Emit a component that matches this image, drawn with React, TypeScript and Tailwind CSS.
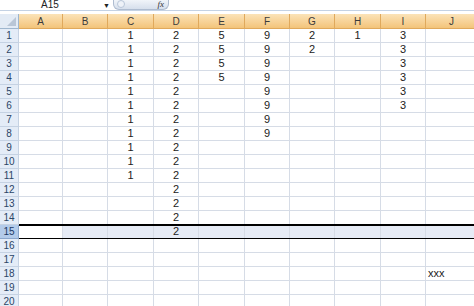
import React from 'react';

const COLS = ['A', 'B', 'C', 'D', 'E', 'F', 'G', 'H', 'I', 'J'];
const WIDTHS = [44, 45, 46, 45, 46, 45, 45, 46, 45, 52];

// values keyed by row number then column letter
const DATA: Record<number, Record<string, string>> = {
  1: { C: '1', D: '2', E: '5', F: '9', G: '2', H: '1', I: '3' },
  2: { C: '1', D: '2', E: '5', F: '9', G: '2', I: '3' },
  3: { C: '1', D: '2', E: '5', F: '9', I: '3' },
  4: { C: '1', D: '2', E: '5', F: '9', I: '3' },
  5: { C: '1', D: '2', F: '9', I: '3' },
  6: { C: '1', D: '2', F: '9', I: '3' },
  7: { C: '1', D: '2', F: '9' },
  8: { C: '1', D: '2', F: '9' },
  9: { C: '1', D: '2' },
  10: { C: '1', D: '2' },
  11: { C: '1', D: '2' },
  12: { D: '2' },
  13: { D: '2' },
  14: { D: '2' },
  15: { D: '2' },
  18: { J: 'xxx' },
};

const ROWS = Array.from({ length: 20 }, (_, i) => i + 1);

export default function App() {
  return (
    <div
      className="w-[474px] h-[306px] overflow-hidden bg-white text-[11px] text-[#222]"
      style={{ fontFamily: '"Liberation Sans", Arial, sans-serif' }}
    >
      {/* Formula bar */}
      <div className="h-[14px] bg-white">
        <div className="flex h-[11px] items-end border-b border-[#c4d2e4]">
          <span className="ml-[41px] w-[62px] text-[10px] leading-[10px] text-[#222]">A15</span>
          <span className="mb-[1px] w-[10px] text-[7px] leading-[7px] text-[#222]">▼</span>
          <div className="flex h-[11px] w-[56px] items-center justify-between rounded-b-[6px] border border-t-0 border-[#aebcd0] bg-gradient-to-b from-[#f4f7fb] to-[#d6dfec] pl-[3px] pr-[2px]">
            <div className="h-[8px] w-[8px] rounded-full border border-[#b8c6d8] bg-[#eef2f8]" />
            <span
              className="px-[2px] italic text-[9px] leading-[10px] text-[#333]"
              style={{ fontFamily: '"Liberation Serif", serif' }}
            >
              fx
            </span>
          </div>
        </div>
      </div>

      {/* Column header row */}
      <div className="flex h-[15px]">
        <div className="flex w-[19px] shrink-0 items-end justify-end border-r border-b border-[#9eb6ce] bg-[#e3ebf5] p-[2px]">
          <div className="h-[9px] w-[9px] bg-[#b9c6d6] [clip-path:polygon(100%_0,100%_100%,0_100%)]" />
        </div>
        {COLS.map((c, i) => (
          <div
            key={c}
            className="flex shrink-0 items-center justify-center border-r border-b border-[#e0a95c] bg-gradient-to-b from-[#fbe3b8] to-[#f3c47a] text-[10px] text-[#3b3b3b]"
            style={{ width: WIDTHS[i] }}
          >
            {c}
          </div>
        ))}
      </div>

      {/* Grid rows */}
      {ROWS.map((r) => {
        const selected = r === 15;
        return (
          <div key={r} className="relative flex h-[14px]">
            <div
              className={`flex w-[19px] shrink-0 items-center justify-center border-r border-b text-[10px] ${
                selected
                  ? 'bg-[#b3cbea] border-[#8aa6cc] text-[#1d3a66]'
                  : 'bg-[#e4ecf7] border-[#c5d2e3] text-[#2b4566]'
              }`}
            >
              {r}
            </div>
            {COLS.map((c, i) => {
              const v = DATA[r]?.[c];
              return (
                <div
                  key={c}
                  className={`flex shrink-0 items-center border-r border-b border-[#d6dce6] ${
                    c === 'J' ? 'justify-start pl-[2px]' : 'justify-center'
                  } ${selected && c !== 'A' ? 'bg-[#e6ebf5]' : 'bg-white'}`}
                  style={{ width: WIDTHS[i] }}
                >
                  {v}
                </div>
              );
            })}
            {selected && (
              <>
                {/* selection outline over the row */}
                <div className="absolute left-[19px] right-0 top-[-1px] h-[2px] bg-black" />
                <div className="absolute left-[19px] right-0 bottom-[-2px] h-[3px] bg-black" />
                <div className="absolute left-[19px] bottom-[-3px] h-[4px] w-[4px] bg-black" />
              </>
            )}
          </div>
        );
      })}
    </div>
  );
}
